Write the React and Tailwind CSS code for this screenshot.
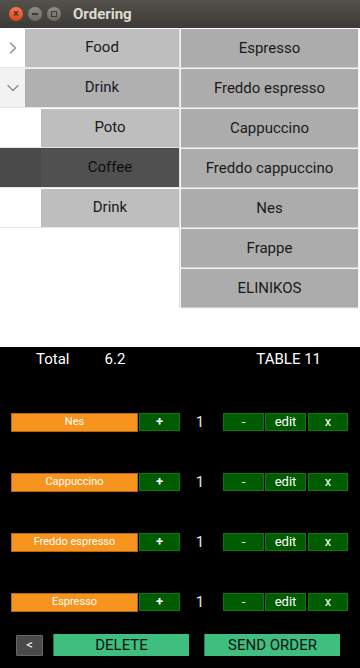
import { ChevronRight, ChevronDown } from 'lucide-react'

const drinks = ['Espresso', 'Freddo espresso', 'Cappuccino', 'Freddo cappuccino', 'Nes', 'Frappe', 'ELINIKOS']

const orderItems = ['Nes', 'Cappuccino', 'Freddo espresso', 'Espresso']

function TitleBar() {
  return (
    <div className="flex items-center h-[28px] bg-gradient-to-b from-[#53524c] to-[#3b3a36] pl-[9px]">
      <div className="flex items-center gap-[5px]">
        <div className="w-[14px] h-[14px] rounded-full bg-gradient-to-b from-[#f47b4f] to-[#d94418] flex items-center justify-center text-[#3b2a20] text-[10px] leading-none font-bold">×</div>
        <div className="w-[14px] h-[14px] rounded-full bg-gradient-to-b from-[#8e8c86] to-[#6a6964] flex items-center justify-center">
          <div className="w-[6px] h-[2px] bg-[#3a3935]" />
        </div>
        <div className="w-[14px] h-[14px] rounded-full bg-gradient-to-b from-[#8e8c86] to-[#6a6964] flex items-center justify-center">
          <div className="w-[6px] h-[6px] border border-[#3a3935]" />
        </div>
      </div>
      <span className="ml-[12px] text-[15px] font-bold text-[#dfdbd2]">Ordering</span>
    </div>
  )
}

function TreeRow({ icon, indent, label, selected, shaded }) {
  return (
    <div className={`flex h-[40px] items-center border-b border-[#e6e6e6] ${selected ? 'bg-[#4a4a4a]' : shaded ? 'bg-[#f2f2f2]' : 'bg-white'}`}>
      <div className={`flex items-center justify-center text-[#8a8a8a] ${indent ? 'w-[41px]' : 'w-[25px]'}`}>
        {icon === 'right' && <ChevronRight className="w-[20px] h-[20px]" strokeWidth={1.5} />}
        {icon === 'down' && <ChevronDown className="w-[20px] h-[20px]" strokeWidth={1.5} />}
      </div>
      <div className={`flex-1 h-[38px] flex items-center justify-center text-[15px] ${selected ? 'bg-[#505050] text-[#0d0d0d]' : shaded ? 'bg-[#b0b0b0] text-[#1a1a1a]' : 'bg-[#bebebe] text-[#1a1a1a]'}`}>
        {label}
      </div>
    </div>
  )
}

function OrderRow({ name }) {
  return (
    <div className="flex items-center h-[18px] pl-[11px] text-white">
      <div className="w-[127px] h-[19px] bg-[#f7941d] border border-[#b9661a] flex items-center justify-center text-[11px]">{name}</div>
      <div className="ml-[1px] w-[41px] h-[18px] bg-[#005c00] border border-[#0d7a0d] flex items-center justify-center text-[13px] font-bold">+</div>
      <div className="w-[43px] pr-[3px] text-center text-[15px] text-[#e6e6e6]">1</div>
      <div className="w-[41px] h-[18px] bg-[#005c00] border border-[#0d7a0d] flex items-center justify-center text-[13px]">-</div>
      <div className="ml-[1px] w-[41px] h-[18px] bg-[#005c00] border border-[#0d7a0d] flex items-center justify-center text-[13px]">edit</div>
      <div className="ml-[2px] w-[40px] h-[18px] bg-[#005c00] border border-[#0d7a0d] flex items-center justify-center text-[13px]">x</div>
    </div>
  )
}

export default function App() {
  return (
    <div className="w-[360px] h-[668px] bg-black flex flex-col overflow-hidden" style={{ fontFamily: 'Roboto, "Liberation Sans", sans-serif' }}>
      <TitleBar />

      {/* Menu area */}
      <div className="flex h-[319px] bg-white">
        <div className="w-[179px] flex flex-col">
          <TreeRow icon="right" label="Food" />
          <TreeRow icon="down" label="Drink" shaded />
          <TreeRow indent label="Poto" />
          <TreeRow indent label="Coffee" selected />
          <TreeRow indent label="Drink" />
        </div>
        <div className="w-[1px] bg-[#e0e0e0] h-[280px]" />
        <div className="flex-1 flex flex-col pl-[1px] pr-[2px]">
          {drinks.map(d => (
            <div key={d} className="h-[40px] pt-[1px]">
              <div className="h-[38px] bg-[#acacac] shadow-[0_1px_1px_rgba(0,0,0,0.2)] flex items-center justify-center text-[15px] text-[#1a1a1a]">
                {d}
              </div>
            </div>
          ))}
        </div>
      </div>

      {/* Order area */}
      <div className="flex-1 flex flex-col text-white">
        <div className="flex items-center h-[22px] mt-[1px] text-[15px]">
          <span className="ml-[36px]">Total</span>
          <span className="ml-[35px]">6.2</span>
          <span className="ml-auto mr-[39px]">TABLE 11</span>
        </div>
        <div className="flex flex-col gap-[42px] mt-[43px]">
          {orderItems.map(n => <OrderRow key={n} name={n} />)}
        </div>
        <div className="flex items-center mt-[23px] h-[22px]">
          <div className="ml-[16px] w-[27px] h-[21px] bg-[#4a4a4a] border border-[#666] rounded-[1px] flex items-center justify-center text-[13px] text-white">&lt;</div>
          <div className="ml-[10px] w-[136px] h-[22px] bg-[#3fbf7f] border-l border-[#1f7a4a] flex items-center justify-center text-[15px] text-[#111]">DELETE</div>
          <div className="ml-[15px] w-[136px] h-[22px] bg-[#3fbf7f] border-l border-[#1f7a4a] flex items-center justify-center text-[15px] text-[#111]">SEND ORDER</div>
        </div>
      </div>
    </div>
  )
}
